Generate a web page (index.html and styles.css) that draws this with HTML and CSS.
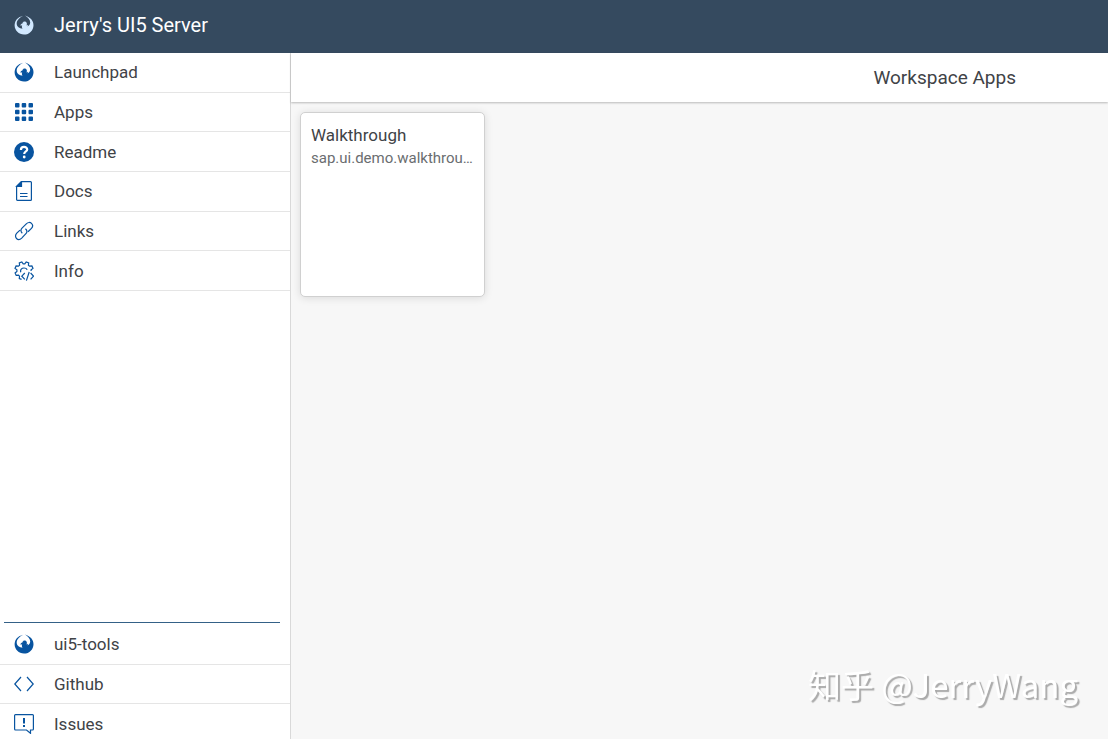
FILE: index.html
```html
<!DOCTYPE html>
<html lang="en">
<head>
  <meta charset="utf-8">
  <title>Jerry's UI5 Server</title>
  <link rel="stylesheet" href="styles.css">
</head>
<body>

  <svg class="defs" aria-hidden="true">
    <symbol id="phoenix" viewBox="0 0 20 20">
      <path d="M9.200 .8C5.500 1.800 2 3.800 .9 8C-.6 14.200 4 19.600 10 19.600C15.500 19.600 19.500 15.200 19.500 10.200C19.500 6 16.500 2.300 11 .6C14.200 2.600 16.400 5 16.200 7.800C16 9.800 15 10.800 13.600 11.400L14 9.800L12.400 10.600C13.200 9 13 7.600 12 7C10.800 6.300 9.400 6.600 8.400 7.500L9.600 8C7.800 8.300 6.500 9.200 6.200 10.600L8.200 10.500C7.600 11.600 7.800 12.600 8.600 13.600C5.400 13.500 2.800 11.600 2.700 8.800C2.600 5.600 5.400 2.700 9.200 .8Z"/>
    </symbol>
  </svg>

  <header class="shell">
    <svg class="icon"><use href="#phoenix"/></svg>
    <h1>Jerry's UI5 Server</h1>
  </header>

  <div class="page">
    <nav class="sidebar">
      <ul class="menu">
        <li><a href="#launchpad">
          <svg class="icon"><use href="#phoenix"/></svg>
          Launchpad</a></li>
        <li><a href="#apps">
          <svg class="icon" viewBox="0 0 20 20">
            <path d="M2 1h2.500q1 0 1 1v2.500q0 1-1 1H2q-1 0-1-1V2q0-1 1-1zM8.700 1h2.500q1 0 1 1v2.500q0 1-1 1H8.700q-1 0-1-1V2q0-1 1-1zM15.500 1H18q1 0 1 1v2.500q0 1-1 1h-2.500q-1 0-1-1V2q0-1 1-1zM2 7.700h2.500q1 0 1 1v2.500q0 1-1 1H2q-1 0-1-1V8.700q0-1 1-1zM8.700 7.700h2.500q1 0 1 1v2.500q0 1-1 1H8.700q-1 0-1-1V8.700q0-1 1-1zM15.500 7.700H18q1 0 1 1v2.500q0 1-1 1h-2.500q-1 0-1-1V8.700q0-1 1-1zM2 14.500h2.500q1 0 1 1V18q0 1-1 1H2q-1 0-1-1v-2.500q0-1 1-1zM8.700 14.500h2.500q1 0 1 1V18q0 1-1 1H8.700q-1 0-1-1v-2.500q0-1 1-1zM15.500 14.500H18q1 0 1 1V18q0 1-1 1h-2.500q-1 0-1-1v-2.500q0-1 1-1z"/>
          </svg>
          Apps</a></li>
        <li><a href="#readme">
          <svg class="icon" viewBox="0 0 20 20">
            <circle cx="10" cy="10" r="10"/>
            <path class="cut" d="M6.900 7.900C6.900 5.900 8.200 4.900 10 4.900S13.200 6 13.200 7.500C13.200 9.500 10.200 9.400 10.200 12"/>
            <circle class="dot" cx="10.200" cy="15" r="1.400"/>
          </svg>
          Readme</a></li>
        <li><a href="#docs">
          <svg class="icon line" viewBox="0 0 20 20">
            <path d="M7.500.6H16.500Q17.400.6 17.400 1.500V18.500Q17.400 19.400 16.500 19.400H3.500Q2.600 19.400 2.600 18.500V5.500ZM6 12.500H13.500M6 15.500H13.500"/>
            <path class="solid" d="M7.500 .6V5.500H2.600Z"/>
          </svg>
          Docs</a></li>
        <li><a href="#links">
          <svg class="icon line" viewBox="0 0 20 20">
            <path d="M8.300 12.200C6.600 10.900 6.500 8.700 8 7.200L12.300 2.800C14 1.100 16.200 1.100 17.500 2.400S18.900 6 17.200 7.700L14 10.800M11.400 7.700C13.200 9 13.400 11.200 11.900 12.700L7.700 17.100C6 18.800 3.800 18.800 2.500 17.500S1.100 13.900 2.800 12.200L6 9.100"/>
          </svg>
          Links</a></li>
        <li><a href="#info">
          <svg class="icon line" viewBox="0 0 20 20">
            <path d="M7.600 18.400L5.300 17.500L5.500 15.200L4.500 14.200L2.200 14.400L1.100 12L2.900 10.500V8.900L1 7.400L2.100 4.900L4.500 5.200L5.600 4.200L5.300 1.900L7.800.9L9.200 2.800H10.800L12.200.9L14.700 1.900L14.400 4.200L15.500 5.200L17.900 4.900L19 7.400L17.100 8.900V10M6.800 11.300C6 8.800 7.700 7 10 7C11.500 7 12.700 7.700 13.200 8.800M10.800 12L7.800 15.200L10.800 18.400M16.600 12L19.500 15.200L16.600 18.400M15.200 11L12.400 19.600"/>
          </svg>
          Info</a></li>
      </ul>

      <ul class="menu bottom">
        <li><a href="#tools">
          <svg class="icon"><use href="#phoenix"/></svg>
          ui5-tools</a></li>
        <li><a href="#github">
          <svg class="icon line" viewBox="0 0 20 20">
            <path d="M7 3L.8 10L7 17M13 3L19.200 10L13 17"/>
          </svg>
          Github</a></li>
        <li><a href="#issues">
          <svg class="icon line" viewBox="0 0 20 20">
            <path d="M1.500.6H18.500Q19.400.6 19.400 1.500V15.100Q19.400 16 18.500 16H16.500V19.300L12.500 16H1.500Q.6 16 .6 15.100V1.500Q.6.6 1.500.6Z"/>
            <path class="bang" d="M10 4V9.500M10 11V13"/>
          </svg>
          Issues</a></li>
      </ul>
    </nav>

    <main class="content">
      <div class="toolbar">
        <h2>Workspace Apps</h2>
      </div>
      <div class="tiles">
        <a class="tile" href="#walkthrough">
          <h3>Walkthrough</h3>
          <p>sap.ui.demo.walkthrou…</p>
        </a>
      </div>
    </main>
  </div>

  <div class="watermark">知乎 @JerryWang</div>

</body>
</html>
```

FILE: styles.css
```css
* {
  margin: 0;
  padding: 0;
  box-sizing: border-box;
}
body {
  height: 100vh;
  overflow: hidden;
  font-family: Roboto, "Noto Sans", sans-serif;
  font-size: 17px;
  color: #3f4347;
  background-color: #f7f7f7;
}
a {
  color: inherit;
  text-decoration: none;
}
h1, h2, h3 {
  font-weight: normal;
}
.defs {
  position: absolute;
  width: 0;
  height: 0;
}

/* Icons */
.icon {
  flex: none;
  width: 20px;
  height: 20px;
  fill: #0854a0;
}
.icon.line {
  fill: none;
  stroke: #0854a0;
  stroke-width: 1.2;
}
.icon .cut {
  fill: none;
  stroke: #fff;
  stroke-width: 2.2;
}
.icon .dot {
  fill: #fff;
}
.icon .solid {
  fill: #0854a0;
}
.icon .bang {
  stroke-width: 2;
}

/* Shell header */
.shell {
  display: flex;
  align-items: center;
  gap: 20px;
  height: 53px;
  padding: 0 14px 3px;
  background-color: #354a5f;
  color: #fff;
}
.shell .icon {
  fill: #d1e8ff;
}
.shell h1 {
  font-size: 20px;
}

.page {
  display: flex;
  height: calc(100vh - 48px);
}

/* Side navigation */
.sidebar {
  display: flex;
  flex-direction: column;
  justify-content: space-between;
  width: 291px;
  background-color: #fff;
  border-right: 1px solid #d9d9d9;
}
.menu {
  display: grid;
  grid-auto-rows: 1fr;
  height: 238px;
  list-style: none;
}
.menu li {
  display: grid;
  border-bottom: 1px solid #e5e5e5;
}
.menu a {
  display: flex;
  align-items: center;
  gap: 20px;
  padding-left: 14px;
}
.menu.bottom {
  position: relative;
  height: 119px;
}
.menu.bottom::before {
  content: "";
  position: absolute;
  top: -3px;
  left: 4px;
  right: 10px;
  height: 1px;
  background-color: #346187;
}

/* Content */
.content {
  flex: 1;
  min-width: 0;
}
.toolbar {
  display: flex;
  align-items: center;
  justify-content: flex-end;
  height: 49px;
  padding-right: 92px;
  background-color: #fff;
  box-shadow: 0 1px 2px rgba(0, 0, 0, 0.25);
}
.toolbar h2 {
  font-size: 19px;
}
.tiles {
  display: flex;
  flex-wrap: wrap;
  padding: 10px 9px;
}
.tile {
  width: 185px;
  height: 185px;
  padding: 11px 10px;
  background-color: #fff;
  border: 1px solid #d0d0d0;
  border-radius: 5px;
  box-shadow: 0 1px 8px rgba(0, 0, 0, 0.12);
}
.tile h3 {
  font-size: 17px;
  line-height: 22px;
}
.tile p {
  font-size: 15px;
  line-height: 24px;
  color: #6a6d70;
  white-space: nowrap;
}

.watermark {
  position: fixed;
  right: 30px;
  bottom: 31px;
  font-family: "Noto Sans CJK SC", sans-serif;
  font-size: 33px;
  line-height: 48px;
  color: #fff;
  text-shadow: 2px 2px 1px #aaa;
}
```
